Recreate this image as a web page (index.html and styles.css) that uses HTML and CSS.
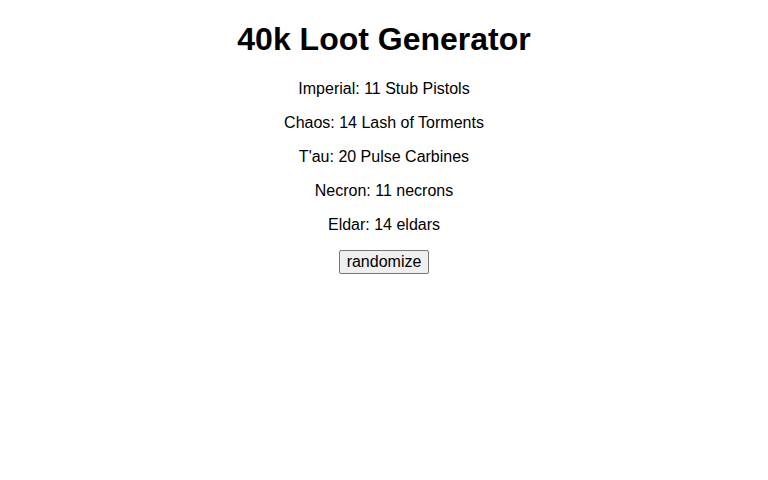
FILE: index.html
```html
<!DOCTYPE html>
<html lang="en">
<head>
    <meta charset="UTF-8">
    <meta name="viewport" content="width=device-width, initial-scale=1.0">
    <title>40k Loot Generator</title>
    <link rel="stylesheet" href="styles.css">
</head>
<body>
    <div class="app">
        <h1>40k Loot Generator</h1>
        <p>Imperial: 11 Stub Pistols</p>
        <p>Chaos: 14 Lash of Torments</p>
        <p>T'au: 20 Pulse Carbines</p>
        <p>Necron: 11 necrons</p>
        <p>Eldar: 14 eldars</p>
        <button class="randomize">randomize</button>
    </div>
</body>
</html>
```

FILE: styles.css
```css
body {
    margin: 0;
    font-family: "Liberation Sans", Arial, sans-serif;
    color: #000;
    background-color: #fff;
}
.app {
    text-align: center;
}
h1 {
    font-size: 32px;
    margin: 0.67em 0;
}
p {
    font-size: 16px;
    margin: 16px 0;
}
.randomize {
    font-family: "Liberation Sans", Arial, sans-serif;
    font-size: 16px;
    padding: 2px 7px;
    color: #000;
    background-color: #efefef;
    border: 1px solid #767676;
    border-radius: 2px;
}
```
